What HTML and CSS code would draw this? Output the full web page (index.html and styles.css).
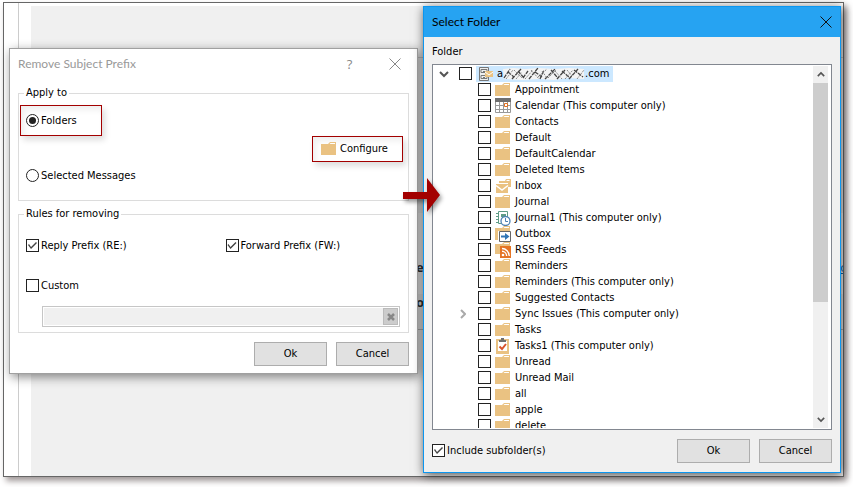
FILE: index.html
```html
<!DOCTYPE html>
<html lang="en">
<head>
<meta charset="utf-8">
<title>Remove Subject Prefix</title>
<link rel="stylesheet" href="styles.css">
</head>
<body>
<svg class="defs" aria-hidden="true">
  <symbol id="folder" viewBox="0 0 16 16">
    <path fill="#eac282" d="M0 3h7l2-2h6v13H0z"/>
    <path fill="#fff" d="M9.500 2h4.500v1H8.500z"/>
  </symbol>
  <symbol id="calendar" viewBox="0 0 16 16">
    <path fill="#fff" d="M0 0h16v15H0z"/>
    <path fill="#6f6f6f" d="M0 0h16v4H0z"/>
    <path fill="none" stroke="#999" d="M.5 4v10.500h15V4M4.500 4v10M8.500 4v10M12.500 4v10M1 7.500h14M1 11.500h14"/>
    <path fill="#fff" stroke="#e07020" d="M9.500 5.500h3v3h-3z"/>
  </symbol>
  <symbol id="inbox" viewBox="0 0 16 16">
    <path fill="#eac282" d="M4 3h6l1-2h5v8h-3V5H4z"/>
    <path fill="#eac282" d="M1 6h12v9H1z"/>
    <path fill="none" stroke="#fff" stroke-width="1.500" d="M1 7.500l6 4.500 6-4.500"/>
    <path fill="#fff" d="M11.500 2h3v1h-3z"/>
  </symbol>
  <symbol id="journal" viewBox="0 0 16 16">
    <path fill="#fff" stroke="#5f9c86" d="M3.500 1.500h9v12h-9z"/>
    <path fill="#5f9c86" d="M6 4h5v3H6zM1 3h3v1H1zM1 6h3v1H1zM1 9h3v1H1zM1 12h3v1H1z"/>
    <circle cx="10.500" cy="11" r="4.500" fill="#fff" stroke="#4d82b4" stroke-width="1.300"/>
    <path fill="none" stroke="#4d82b4" d="M10.500 8v3.500H13"/>
  </symbol>
  <symbol id="outbox" viewBox="0 0 16 16">
    <path fill="#eac282" d="M0 2h7l2-2h6v14H0z"/>
    <path fill="#fff" d="M9.500 1h4.500v1H8.500zM3 5h13v11H3z"/>
    <path fill="#fff" stroke="#666" d="M4.500 5.500h11v10h-11z"/>
    <path fill="#3276b5" d="M6 9.500h4V7l4.500 3.500L10 14v-2.500H6z"/>
  </symbol>
  <symbol id="rss" viewBox="0 0 16 16">
    <path fill="#eac282" d="M0 2h7l2-2h6v12H0z"/>
    <path fill="#fff" d="M9.500 1h4.500v1H8.500z"/>
    <path fill="#e57423" d="M5 4h11v12H5z"/>
    <circle cx="8" cy="13" r="1.300" fill="#fff"/>
    <path fill="none" stroke="#fff" stroke-width="1.400" d="M7 9.300c2.500 0 4.600 2 4.600 4.700M7 6.500c4 0 7.200 3.200 7.200 7.500"/>
  </symbol>
  <symbol id="tasks" viewBox="0 0 16 16">
    <path fill="#eac282" d="M1 1h13v15H1z"/>
    <path fill="#fff" d="M3 3h9v10H3z"/>
    <path fill="#6f6f6f" d="M4 4V2h2V0h3v2h2v2z"/>
    <path fill="none" stroke="#d9532c" stroke-width="2" d="M4.500 8.500L7 11l4-5"/>
  </symbol>
  <symbol id="store" viewBox="0 0 16 16">
    <path fill="#eee" stroke="#777" d="M1.500 1.500h9v13h-9z"/>
    <path fill="none" stroke="#777" d="M3 3.500h6v3H3zM3 9.500h6v3H3zM5 5.500h2M5 11.500h2"/>
    <path fill="#eac282" d="M7 5h8v6H7z"/>
    <path fill="none" stroke="#fff" d="M7 6l4 3 4-3"/>
  </symbol>
  <symbol id="down" viewBox="0 0 10 8"><path fill="none" stroke="#555" stroke-width="2" d="M1 2l4 4 4-4"/></symbol>
</svg>

<main class="desktop">
  <div class="backdrop" aria-hidden="true">
    <div class="band band-top"></div>
    <div class="band band-middle"></div>
    <div class="band band-text"><b>en</b><a href="#" tabindex="-1">o</a></div>
    <div class="band band-row"><b>ou</b></div>
    <div class="band"></div>
  </div>

  <form class="dialog prefix">
    <header class="title">
      <h1>Remove Subject Prefix</h1>
      <button type="button" class="tool help" aria-label="Help">?</button>
      <button type="button" class="tool" aria-label="Close"><svg viewBox="0 0 12 12" width="12" height="12"><path fill="none" stroke="#888" d="M.5.5l11 11M11.500.5l-11 11"/></svg></button>
    </header>
    <fieldset class="apply">
      <legend>Apply to</legend>
      <label class="choice framed"><input type="radio" name="scope" checked>Folders</label>
      <button type="button" class="configure framed"><svg width="16" height="16"><use href="#folder"/></svg>Configure</button>
      <label class="choice selected"><input type="radio" name="scope">Selected Messages</label>
    </fieldset>
    <fieldset class="rules">
      <legend>Rules for removing</legend>
      <div class="pair">
        <label class="choice"><input type="checkbox" checked>Reply Prefix (RE:)</label>
        <label class="choice"><input type="checkbox" checked>Forward Prefix (FW:)</label>
      </div>
      <label class="choice custom"><input type="checkbox">Custom</label>
      <div class="field">
        <input type="text" aria-label="Custom prefix" disabled>
        <button type="button" aria-label="Clear" disabled><svg viewBox="0 0 8 8" width="8" height="8"><path fill="none" stroke="#888" stroke-width="2.500" d="M1 1l6 6M7 1L1 7"/></svg></button>
      </div>
    </fieldset>
    <div class="actions"><button type="submit" class="push">Ok</button><button type="button" class="push">Cancel</button></div>
  </form>

  <form class="dialog select">
    <header class="title">
      <h2>Select Folder</h2>
      <button type="button" class="tool" aria-label="Close"><svg viewBox="0 0 12 12" width="12" height="12"><path fill="none" stroke="#111" d="M.5.5l11 11M11.500.5l-11 11"/></svg></button>
    </header>
    <div class="body">
      <p id="folder-label">Folder</p>
      <div class="list" role="group" aria-labelledby="folder-label">
        <ul class="tree">
          <li>
            <label class="row root"><span class="expander"><svg width="10" height="8"><use href="#down"/></svg></span><input type="checkbox"><span class="account"><svg width="16" height="16"><use href="#store"/></svg><span class="address">a<svg class="scribble" viewBox="0 0 82 14" width="82" height="14"><path fill="#f4f4f4" d="M0 2l10-1 12 1 14-1 16 1 14-1 15 1v10l-16-1-14 2-14-1-18 1-18-1z"/><path fill="none" stroke="#444" stroke-width="1.300" stroke-dasharray="4 1" d="M1 11l6-9M5 5l6 5M9 12l9-10M15 4l6 7M20 11l5-7M26 12l9-11M32 5l7 5M37 12l4-9M42 12l10-10M48 3l6 7M54 12l8-9M59 4l8 7M66 12l9-10M71 3l9 7"/><path fill="none" stroke="#888" stroke-dasharray="2 1" d="M3 12l7-9M11 3l8 8M22 12l8-9M28 3l8 9M35 10l9-8M45 11l8-8M52 4l7 8M62 12l8-9M74 12l7-9M13 12l6-7M39 4l5 7M64 3l5 6"/></svg>.com</span></span></label>
            <ul>
              <li><label class="row"><span class="expander"></span><input type="checkbox"><svg width="16" height="16"><use href="#folder"/></svg>Appointment</label></li>
              <li><label class="row"><span class="expander"></span><input type="checkbox"><svg width="16" height="16"><use href="#calendar"/></svg>Calendar (This computer only)</label></li>
              <li><label class="row"><span class="expander"></span><input type="checkbox"><svg width="16" height="16"><use href="#folder"/></svg>Contacts</label></li>
              <li><label class="row"><span class="expander"></span><input type="checkbox"><svg width="16" height="16"><use href="#folder"/></svg>Default</label></li>
              <li><label class="row"><span class="expander"></span><input type="checkbox"><svg width="16" height="16"><use href="#folder"/></svg>DefaultCalendar</label></li>
              <li><label class="row"><span class="expander"></span><input type="checkbox"><svg width="16" height="16"><use href="#folder"/></svg>Deleted Items</label></li>
              <li><label class="row"><span class="expander"></span><input type="checkbox"><svg width="16" height="16"><use href="#inbox"/></svg>Inbox</label></li>
              <li><label class="row"><span class="expander"></span><input type="checkbox"><svg width="16" height="16"><use href="#folder"/></svg>Journal</label></li>
              <li><label class="row"><span class="expander"></span><input type="checkbox"><svg width="16" height="16"><use href="#journal"/></svg>Journal1 (This computer only)</label></li>
              <li><label class="row"><span class="expander"></span><input type="checkbox"><svg width="16" height="16"><use href="#outbox"/></svg>Outbox</label></li>
              <li><label class="row"><span class="expander"></span><input type="checkbox"><svg width="16" height="16"><use href="#rss"/></svg>RSS Feeds</label></li>
              <li><label class="row"><span class="expander"></span><input type="checkbox"><svg width="16" height="16"><use href="#folder"/></svg>Reminders</label></li>
              <li><label class="row"><span class="expander"></span><input type="checkbox"><svg width="16" height="16"><use href="#folder"/></svg>Reminders (This computer only)</label></li>
              <li><label class="row"><span class="expander"></span><input type="checkbox"><svg width="16" height="16"><use href="#folder"/></svg>Suggested Contacts</label></li>
              <li><label class="row"><span class="expander"><svg viewBox="0 0 8 10" width="8" height="10"><path fill="none" stroke="#aaa" stroke-width="2" d="M3 1l4 4-4 4"/></svg></span><input type="checkbox"><svg width="16" height="16"><use href="#folder"/></svg>Sync Issues (This computer only)</label></li>
              <li><label class="row"><span class="expander"></span><input type="checkbox"><svg width="16" height="16"><use href="#folder"/></svg>Tasks</label></li>
              <li><label class="row"><span class="expander"></span><input type="checkbox"><svg width="16" height="16"><use href="#tasks"/></svg>Tasks1 (This computer only)</label></li>
              <li><label class="row"><span class="expander"></span><input type="checkbox"><svg width="16" height="16"><use href="#folder"/></svg>Unread</label></li>
              <li><label class="row"><span class="expander"></span><input type="checkbox"><svg width="16" height="16"><use href="#folder"/></svg>Unread Mail</label></li>
              <li><label class="row"><span class="expander"></span><input type="checkbox"><svg width="16" height="16"><use href="#folder"/></svg>all</label></li>
              <li><label class="row"><span class="expander"></span><input type="checkbox"><svg width="16" height="16"><use href="#folder"/></svg>apple</label></li>
              <li><label class="row"><span class="expander"></span><input type="checkbox"><svg width="16" height="16"><use href="#folder"/></svg>delete</label></li>
            </ul>
          </li>
        </ul>
        <div class="scrollbar" aria-hidden="true">
          <span class="step"><svg class="up" width="8" height="7"><use href="#down"/></svg></span>
          <span class="thumb"></span>
          <span class="step"><svg width="8" height="7"><use href="#down"/></svg></span>
        </div>
      </div>
      <div class="actions">
        <label class="choice include"><input type="checkbox" checked>Include subfolder(s)</label>
        <button type="submit" class="push">Ok</button><button type="button" class="push">Cancel</button>
      </div>
    </div>
  </form>

  <svg class="arrow" viewBox="0 0 37 34" width="37" height="34" aria-hidden="true"><path fill="#a30000" d="M0 14h24V0l13 17-13 17V21H0z"/></svg>
</main>
</body>
</html>
```
FILE: styles.css
```css
* { box-sizing: border-box; }

body {
  margin: 0;
  padding: 2px 9px 10px 3px;
  background: #fff;
  color: #000;
  font: 11px/16px "DejaVu Sans Condensed", "Open Sans", sans-serif;
}

h1, h2, p, ul { margin: 0; padding: 0; list-style: none; }
button, input { margin: 0; padding: 0; font: inherit; color: inherit; }
svg { display: block; flex: none; }
.defs { display: none; }

.desktop {
  position: relative;
  display: grid;
  grid-template-columns: 409fr 418fr;
  gap: 5px;
  align-items: start;
  padding: 3px 2px 3px 5px;
  border: 1px solid #666;
  box-shadow: 3px 4px 6px #a09898;
}

/* Window that shows behind the dialogs */
.backdrop {
  position: absolute;
  inset: 0;
  display: flex;
  flex-direction: column;
  margin-left: 14px;
  padding: 3px 0 0 12px;
  border-left: 1px solid #ccc;
  overflow: hidden;
}
.band { flex: 1; background: #f0f0f0; }
.band-top { flex: none; height: 52px; border-bottom: 1px solid #ccc; }
.band-middle { flex: none; height: 155px; }
.band-text, .band-row {
  flex: none;
  display: flex;
  justify-content: space-between;
  padding-left: 385px;
  font: 13px/16px "Open Sans", sans-serif;
  color: #333;
}
.band-text { height: 81px; padding-top: 46px; background: #fafafa; }
.band-text a { color: #0a6fc2; margin-right: -5px; }
.band-row { height: 36px; border-bottom: 1px solid #bbb; }

.dialog { position: relative; min-width: 0; }
.title { display: flex; align-items: center; }
.title h1, .title h2 {
  flex: 1;
  font: 12px/16px Lato, "Open Sans", sans-serif;
}
.tool {
  display: grid;
  place-items: center;
  width: 29px;
  height: 29px;
  border: 0;
  background: none;
}
.help { margin-right: 16px; font: 13px/16px "Open Sans", sans-serif; color: #888; }

.prefix {
  margin-top: 42px;
  padding: 0 8px 7px;
  border: 1px solid #a0a0a0;
  background: #fff;
  box-shadow: 2px 3px 10px #0007;
}
.prefix h1 { color: #999; }

fieldset {
  display: flex;
  flex-direction: column;
  align-items: flex-start;
  min-width: 0;
  margin: 0;
  padding: 0;
  border: 1px solid #dcdcdc;
}
legend { margin-left: 5px; padding: 0 2px; }
.apply { margin-top: 7px; padding-bottom: 16px; }
.rules { margin-top: 5px; padding-bottom: 5px; }

.choice { display: flex; align-items: center; gap: 2px; white-space: nowrap; }
.choice.framed { width: 82px; height: 31px; margin: 4px 0 0 1px; padding-left: 5px; }
.framed { border: 1px solid #a30000; box-shadow: 3px 4px 6px #0002, inset 3px 4px 6px #0001; }
.configure {
  align-self: flex-end;
  display: flex;
  align-items: center;
  gap: 3px;
  width: 91px;
  height: 26px;
  margin-right: 5px;
  padding-left: 8px;
  background: #fff;
}
.selected, .custom { margin-left: 7px; }
.selected { margin-top: 6px; }
.custom { margin-top: 24px; }
.pair { display: grid; grid-template-columns: 1fr 1fr; width: 100%; gap: 17px; margin-top: 16px; padding-left: 7px; }

input[type="checkbox"], input[type="radio"] {
  appearance: none;
  flex: none;
  width: 13px;
  height: 13px;
  margin-bottom: 1px;
  border: 1px solid #222;
  background: #fff;
}
input[type="radio"] { border-radius: 50%; }
input:checked::before { content: ""; display: block; }
input[type="radio"]:checked::before {
  width: 7px;
  height: 7px;
  margin: 2px;
  border-radius: 50%;
  background: #222;
}
input[type="checkbox"]:checked::before {
  width: 11px;
  height: 11px;
  background: #444;
  clip-path: polygon(1px 5px, 2px 4px, 4px 7px, 9px 2px, 10px 3px, 4px 9px);
}

.field {
  align-self: stretch;
  display: flex;
  height: 21px;
  margin: 12px 8px 0 23px;
  padding: 1px;
  border: 1px solid #c6c6c6;
}
.field input { flex: 1; min-width: 0; border: 0; background: #f0f0f0; }
.field button {
  display: grid;
  place-items: center;
  width: 15px;
  border: 1px solid #bbb;
  background: #ccc;
}

.actions { display: flex; justify-content: flex-end; gap: 9px; margin-top: 9px; }
.push { width: 73px; height: 24px; border: 1px solid #adadad; background: #e1e1e1; }

.select {
  border: 1px solid #0c96ef;
  background: #f0f0f0;
  box-shadow: 1px 2px 10px #000a;
}
.select .title { height: 30px; padding-left: 8px; background: #26a3f2; }
.select .body { padding: 7px 8px 9px; }
.list {
  display: flex;
  height: 366px;
  margin-top: 4px;
  padding: 1px;
  border: 1px solid #828790;
  background: #fff;
}
.tree { flex: 1; min-width: 0; overflow: hidden; }
.row { display: flex; align-items: center; gap: 4px; height: 16px; padding-left: 24px; white-space: nowrap; }
.root { padding-left: 5px; }
.expander { width: 16px; }
.account { display: flex; align-items: center; gap: 3px; padding: 0 4px 0 2px; background: #cce8ff; }
.address { display: flex; align-items: center; height: 16px; }
.scrollbar { display: flex; flex-direction: column; width: 17px; background: #f0f0f0; border-right: 2px solid #fff; }
.step { display: grid; place-items: center; height: 17px; }
.up { transform: rotate(180deg); }
.thumb { height: 219px; margin-bottom: auto; background: #cdcdcd; }
.include { margin-right: auto; }

.arrow { position: absolute; top: 175px; left: 399px; filter: drop-shadow(2px 3px 2px #0006); }
```
